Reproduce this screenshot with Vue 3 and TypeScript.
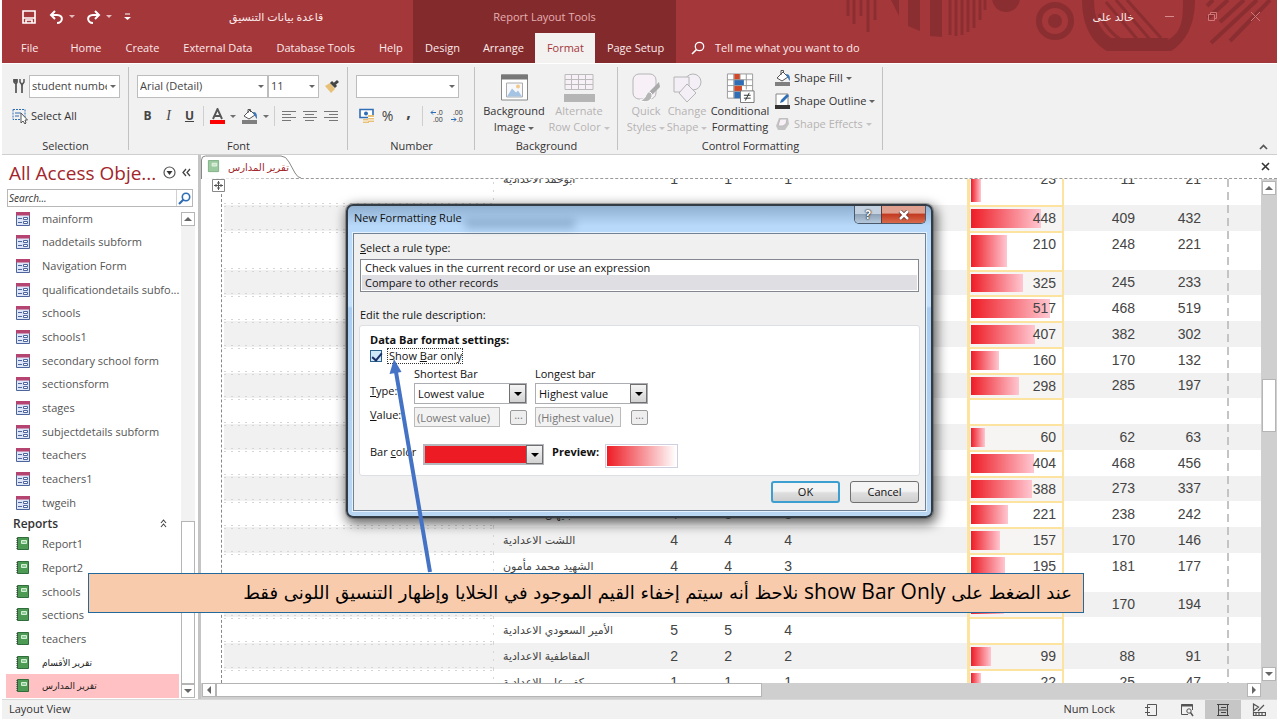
<script setup lang="ts">
import { ref } from 'vue'

interface Row {
  name: string
  a: string
  b: string
  c: string
  total: string
  bar: number
  x: string
  y: string
  tall?: boolean
}

const forms: string[] = [
  'mainform', 'naddetails subform', 'Navigation Form', 'qualificationdetails subfo...',
  'schools', 'schools1', 'secondary school form', 'sectionsform', 'stages',
  'subjectdetails subform', 'teachers', 'teachers1', 'twgeih',
]
const reports = [
  { label: 'Report1' }, { label: 'Report2' }, { label: 'schools' }, { label: 'sections' },
  { label: 'teachers' }, { label: 'تقرير الأقسام', rtl: true },
  { label: 'تقرير المدارس', rtl: true, active: true },
]

const row = (total: string, bar: number, x: string, y: string, name = '', a = '', b = '', c = '', tall = false): Row =>
  ({ total, bar, x, y, name, a, b, c, tall })

const rows: Row[] = [
  row('23', 10, '11', '21', 'ابوحمد الاعدادية', '1', '1', '1', true),
  row('448', 70, '409', '432'),
  row('210', 36, '248', '221', '', '', '', '', true),
  row('325', 52, '245', '233'),
  row('517', 79, '468', '519'),
  row('407', 64, '382', '302'),
  row('160', 28, '170', '132'),
  row('298', 48, '285', '197'),
  row('', 0, '', ''),
  row('60', 14, '62', '63'),
  row('404', 63, '468', '456'),
  row('388', 61, '273', '337'),
  row('221', 37, '238', '242', 'بنيهان الاعدادية', '4', '3', '3'),
  row('157', 29, '170', '146', 'اللشت الاعدادية', '4', '4', '4'),
  row('195', 34, '181', '177', 'الشهيد محمد مأمون', '4', '4', '3', true),
  row('', 33, '170', '194'),
  row('', 0, '', '', 'الأمير السعودي الاعدادية', '5', '5', '4'),
  row('99', 20, '88', '91', 'المقاطفية الاعدادية', '2', '2', '2'),
  row('22', 10, '25', '47', 'كفر علي الاعدادية', '1', '1', '1'),
]

const showBarOnly = ref(true)
</script>

<template>
  <div class="window">
    <header class="top">
      <svg class="deco" width="440" height="63" viewBox="838 0 440 63" aria-hidden="true">
        <g fill="none" stroke="#8b2e31">
          <path stroke-width="3" d="M849 0v16M855 0v24M862 0v16M869 0v32M876 0v20" />
          <path stroke-width="3" d="M951 0v35M957 0v36M963 0v35M969 0v32M975 0v28M981 0v20M986 0v10" />
          <circle cx="1056" cy="21" r="16" stroke-width="6" />
          <path stroke-width="3" d="M1100 14q12 24 34 32M1107 2l36 43M1117 0l37 43M1128 0l34 38" />
          <path stroke-width="4" d="M1212 43l46-43M1231 41l40-41M1221 22l24-22M1209 18l20-18M1208 6l6-6" />
        </g>
        <g fill="#8b2e31">
          <path d="M892 0h8v16zM909 0h12v31l-12-5zM931 0h12v37l-12-1z" />
          <path d="M1083 0h12c0 20 7 32 20 40h54c14-8 15-20 15-40h12c0 24-9 42-24 51h-64c-16-9-25-27-25-51z" />
          <path d="M1112 38h58l-6 8h-50z" />
          <circle cx="1056" cy="21" r="7" /><circle cx="1007" cy="-2" r="14" />
        </g>
      </svg>
      <div class="left-block">
        <div class="title-row">
          <button class="qat" aria-label="Save"><svg width="14" height="14" viewBox="0 0 14 14"><path d="M1 1h12v12H1zM1 8h12M4 13v-3h6v3" fill="none" stroke="#fff" stroke-width="1.6" /></svg></button>
          <button class="qat undo" aria-label="Undo"><svg width="15" height="14" viewBox="0 0 15 14"><path d="M6 1L2 5l4 4M2 5h6c7 0 6 8 0 8" fill="none" stroke="#fff" stroke-width="2" /></svg><i class="caret" /></button>
          <button class="qat redo" aria-label="Redo"><svg width="15" height="14" viewBox="0 0 15 14"><path d="M9 1l4 4-4 4M13 5H7C0 5 1 13 7 13" fill="none" stroke="#fff" stroke-width="2" /></svg><i class="caret" /></button>
          <button class="qat more" aria-label="Customize toolbar"><svg width="7" height="8" viewBox="0 0 7 8"><path d="M1 1h5" stroke="#fff" /><path d="M0 4h7L3.500 7z" fill="#fff" /></svg></button>
          <span class="file-title" dir="rtl">قاعدة بيانات التنسيق</span>
        </div>
        <nav class="tabs">
          <button class="file">File</button><button>Home</button><button>Create</button><button>External Data</button><button>Database Tools</button><button>Help</button>
        </nav>
      </div>
      <div class="context-block">
        <div class="context-title">Report Layout Tools</div>
        <nav class="tabs"><button>Design</button><button>Arrange</button><button class="on">Format</button><button>Page Setup</button></nav>
      </div>
      <div class="right-block">
        <div class="title-row end">
          <span class="user" dir="rtl">خالد على</span>
          <button class="wb" aria-label="Minimize"><svg width="11" height="11"><path d="M1 5.500h9" stroke="#d98a8c" /></svg></button>
          <button class="wb" aria-label="Restore"><svg width="11" height="11"><path d="M1.500 3.500h6v6h-6zM3.500 3V1.500h6v6H8" fill="none" stroke="#d0777a" /></svg></button>
          <button class="wb" aria-label="Close"><svg width="11" height="11"><path d="M1 1l9 9M10 1l-9 9" stroke="#d0777a" /></svg></button>
        </div>
        <div class="tell">
          <svg width="14" height="14" viewBox="0 0 14 14"><circle cx="8.500" cy="5.500" r="4.200" fill="none" stroke="#fff" stroke-width="1.300" /><path d="M5.500 8.500L1 13" stroke="#fff" stroke-width="1.600" /></svg>
          <span>Tell me what you want to do</span>
        </div>
      </div>
    </header>

    <section class="ribbon">
      <div class="group g-selection">
        <div class="line">
          <svg width="12" height="16" viewBox="0 0 12 16"><path d="M3 6v9M1 1v3l2 2 1-2V1M2.500 1v3M9 7v8" stroke="#555" stroke-width="1.700" fill="none" /><path d="M7 1v3l2 3 2-3V1" fill="none" stroke="#555" stroke-width="1.500" /></svg>
          <label class="combo c-student"><select aria-label="Control"><option>student numbe</option></select><i class="caret" /></label>
        </div>
        <div class="line second">
          <button class="text-btn"><svg width="16" height="17" viewBox="0 0 16 17"><path d="M1 1.500h12v10H1z" fill="none" stroke="#2f6db5" stroke-dasharray="2 1" /><path d="M3 5h6M3 8h4" stroke="#2f6db5" /><path d="M9 5v10l2-2 2 3 1-1-1-3h2.500z" fill="#fff" stroke="#555" /></svg>Select All</button>
        </div>
        <div class="caption">Selection</div>
      </div>
      <div class="group g-font">
        <div class="line">
          <label class="combo c-font"><select aria-label="Font"><option>Arial (Detail)</option></select><i class="caret" /></label>
          <label class="combo c-size"><select aria-label="Font size"><option>11</option></select><i class="caret" /></label>
          <button class="icon painter" aria-label="Format painter"><svg width="16" height="15" viewBox="0 0 16 15"><path d="M1 7l5-3 5 6-4 4z" fill="#e9c078" /><path d="M7 3l5 5M9.500 6L14 2" stroke="#444" stroke-width="3" /></svg></button>
        </div>
        <div class="line second font-buttons">
          <button class="icon"><b>B</b></button><button class="icon"><i class="ital">I</i></button><button class="icon"><b><u>U</u></b></button>
          <span class="sep" />
          <button class="icon wide" aria-label="Font color"><svg width="15" height="16" viewBox="0 0 15 16"><path d="M3 11L7.500 1 12 11M4.500 8h6" fill="none" stroke="#555" stroke-width="1.900" /><path fill="#f00" d="M0 12h15v4H0z" /></svg><i class="caret" /></button>
          <button class="icon wide" aria-label="Fill color"><svg width="16" height="16" viewBox="0 0 16 16"><path d="M2 8l6-6 5 5-6 4zM6 5V1.500h2.500V4" fill="#fff" stroke="#555" /><path d="M11 4c4 0 4 3 4 7-2-1-1-3-3-4z" fill="#3b78b8" /><path d="M0 12h15v4H0z" fill="#7f7f7f" /></svg><i class="caret" /></button>
          <span class="sep" />
          <button class="icon" aria-label="Align left"><svg width="14" height="12"><path d="M0 1.500h14M0 4.500h9M0 7.500h14M0 10.500h9" stroke="#777" /></svg></button>
          <button class="icon" aria-label="Center"><svg width="14" height="12"><path d="M0 1.500h14M2 4.500h9M0 7.500h14M2 10.500h9" stroke="#777" /></svg></button>
          <button class="icon" aria-label="Align right"><svg width="14" height="12"><path d="M0 1.500h14M5 4.500h9M0 7.500h14M5 10.500h9" stroke="#777" /></svg></button>
        </div>
        <div class="caption">Font</div>
      </div>
      <div class="group g-number">
        <div class="line"><label class="combo c-format"><select aria-label="Number format"><option></option></select><i class="caret" /></label></div>
        <div class="line second num-buttons">
          <button class="icon" aria-label="Currency"><svg width="16" height="16" viewBox="0 0 16 16"><path d="M1 1.500h13v8H1z" fill="#fff" stroke="#2f6db5" stroke-width="1.600" /><circle cx="7" cy="5.500" r="2" fill="#2f6db5" /><path d="M9 7h6v7H9zM4 11h6v4H4z" fill="#e9c078" /><path d="M9 9.500h6M9 12h6M4 13h5" stroke="#fff" /></svg></button>
          <button class="icon pct">%</button><button class="icon comma">,</button>
          <span class="sep" />
          <button class="icon dec" aria-label="Increase decimals"><svg width="14" height="14" viewBox="0 0 14 14"><text x="7" y="6">.0</text><text x="3" y="13">.00</text><path d="M6 3.500H1M3 1.500l-2 2 2 2" fill="none" stroke="#2f6db5" /></svg></button>
          <button class="icon dec" aria-label="Decrease decimals"><svg width="14" height="14" viewBox="0 0 14 14"><text x="2" y="6">.00</text><text x="6" y="13">.0</text><path d="M0 10.500h5M3 8.500l2 2-2 2" fill="none" stroke="#2f6db5" /></svg></button>
        </div>
        <div class="caption">Number</div>
      </div>
      <div class="group g-back">
        <div class="bigs">
          <button class="big b-bg"><svg width="27" height="27" viewBox="0 0 27 27"><path d="M.5.500h26v25H.5z" fill="#fff" stroke="#888" /><path d="M0 0h27v5H0z" fill="#777" /><path d="M5.500 8.500h16v14h-16z" fill="#f6f8fb" stroke="#aaa" /><path d="M6 22l5-8 4 4 2-2 4 6z" fill="#a5c3e2" /><circle cx="17" cy="12" r="2" fill="#f3c98b" /></svg><span>Background<br>Image <i class="caret" /></span></button>
          <button class="big b-alt off" disabled><svg width="31" height="28" viewBox="0 0 31 28"><path d="M1 .5h28v15H1z" fill="#f7f0f7" stroke="#bbb" /><path d="M1 5.500h28M1 10.500h28M7.500 0v16M14.500 0v16M21.500 0v16" stroke="#bbb" /><path d="M0 20h31v8H0z" fill="#b5b5b5" /></svg><span>Alternate<br>Row Color <i class="caret" /></span></button>
        </div>
        <div class="caption">Background</div>
      </div>
      <div class="group g-control">
        <div class="bigs">
          <button class="big b-quick off" disabled><svg width="29" height="30" viewBox="0 0 29 30"><rect x="1" y="1" width="23" height="25" rx="6" fill="#f7f0f7" stroke="#b5b5b5" /><path d="M27 9L16 20l3 3 9-9z" fill="#aaa" /><path d="M18 19c-5-1-3 8-10 8 5 4 13 1 12-6z" fill="#b5b5b5" stroke="#fff" /></svg><span>Quick<br>Styles <i class="caret" /></span></button>
          <button class="big b-shape off" disabled><svg width="29" height="30" viewBox="0 0 29 30"><circle cx="20" cy="9" r="8" fill="#f4eff6" stroke="#b5b5b5" /><path d="M1 4h15v15H1z" fill="#f4eff6" stroke="#b5b5b5" /><path d="M14 11l9 9-9 9-8-9z" fill="#f4eff6" stroke="#b5b5b5" /></svg><span>Change<br>Shape <i class="caret" /></span></button>
          <button class="big b-cond"><svg width="29" height="31" viewBox="0 0 29 31"><path d="M1 1h26v25H1z" fill="#fff" stroke="#999" /><path d="M8 1h6v6H8zM8 13h8v6H8z" fill="#d24726" /><path d="M8 7h10v6H8zM8 19h6v7H8z" fill="#2f6db5" /><path d="M1 7h26M1 13h26M1 19h26M7.500 1v25M14 1v6M20.500 1v16" stroke="#999" fill="none" /><path d="M14.500 18.500h14v12h-14z" fill="#fff" stroke="#777" /><path d="M18 23h7M18 26h7M23.500 20.500l-4 8" stroke="#333" /></svg><span>Conditional<br>Formatting</span></button>
          <div class="stack">
            <button class="text-btn"><svg width="16" height="16" viewBox="0 0 16 16"><path d="M2 8l6-6 5 5-6 4zM6 5V.5h2.500V3" fill="#fff" stroke="#555" /><path d="M11 4c4 0 4 3 4 7-2-1-1-3-3-4z" fill="#3b78b8" /><path d="M0 12h15v4H0z" fill="#7f7f7f" /></svg>Shape Fill <i class="caret" /></button>
            <button class="text-btn"><svg width="16" height="16" viewBox="0 0 16 16"><path d="M1 12V1h12v11" fill="#fff" stroke="#888" /><path d="M5 10l1-3 6-6 2 2-6 6z" fill="#2f6db5" /><path d="M0 12h15v4H0z" fill="#333" /></svg>Shape Outline <i class="caret" /></button>
            <button class="text-btn off" disabled><svg width="16" height="16" viewBox="0 0 16 16"><path d="M4 2h9l1 6-4 6H3l-2-4z" fill="#c4c4c4" /><path d="M5 3h7l-1 5-3 2H3z" fill="#f7f0f7" stroke="#bbb" /></svg>Shape Effects <i class="caret" /></button>
          </div>
        </div>
        <div class="caption">Control Formatting</div>
      </div>
      <button class="collapse" aria-label="Collapse ribbon"><svg width="9" height="6"><path d="M1 5l3.500-3.500L8 5" fill="none" stroke="#555" stroke-width="1.700" /></svg></button>
    </section>

    <main class="work">
      <aside class="nav">
        <div class="nav-head">
          <h1>All Access Obje...</h1>
          <button aria-label="Choose category"><svg width="13" height="13"><circle cx="6.500" cy="6.500" r="5.500" fill="none" stroke="#555" stroke-width="1.200" /><path d="M3.500 5h6l-3 4z" fill="#333" /></svg></button>
          <button class="fold" aria-label="Collapse pane"><svg width="9" height="9"><path d="M4 1L1 4.500 4 8M8 1L5 4.500 8 8" fill="none" stroke="#444" stroke-width="1.300" /></svg></button>
        </div>
        <div class="search">
          <input type="text" placeholder="Search..." aria-label="Search">
          <button aria-label="Search objects"><svg width="13" height="13" viewBox="0 0 13 13"><circle cx="8" cy="5" r="3.700" fill="none" stroke="#2f6db5" stroke-width="1.600" /><path d="M5.500 7.500L1 12" stroke="#2f6db5" stroke-width="2.200" /></svg></button>
        </div>
        <div class="nav-body">
          <ul>
            <li v-for="f in forms" :key="f" class="item"><a href="#"><svg width="14" height="14" viewBox="0 0 14 14"><path d="M.5.500h13v13H.5z" fill="#dde5f6" stroke="#4d659c" /><path d="M0 0h14v3.500H0z" fill="#b54470" /><path d="M2 6.500h4M2 10.500h4" stroke="#4d659c" /><path d="M7.500 5.500h4v2h-4zM7.500 9.500h4v2h-4z" fill="#fff" stroke="#4d659c" /></svg>{{ f }}</a></li>
            <li class="section">Reports<svg width="7" height="9"><path d="M1 4l2.500-3L6 4M1 8l2.500-3L6 8" fill="none" stroke="#444" stroke-width="1.100" /></svg></li>
            <li v-for="r in reports" :key="r.label" class="item" :class="{ active: r.active, rtl: r.rtl }"><a href="#"><svg width="14" height="14" viewBox="0 0 14 14"><path d="M1.500.500h11v12h-11z" fill="#4d9a55" stroke="#2f6d3a" /><path d="M1 1v12" stroke="#333" stroke-dasharray="1 1" /><path d="M5.500 3.500h5v3h-5z" fill="#8fc795" stroke="#d5efd7" /></svg><span>{{ r.label }}</span></a></li>
          </ul>
          <div class="vbar">
            <button aria-label="Scroll up"><i class="up" /></button><span class="track" /><span class="thumb" /><button aria-label="Scroll down"><i class="down" /></button>
          </div>
        </div>
      </aside>

      <section class="doc">
        <div class="doc-tabs">
          <svg class="tab-shape" width="100" height="24" viewBox="0 0 100 24"><path d="M.5 24V5q0-4 4-4H80q5 0 8 6l6 11q3 5 6 5" fill="#fff" stroke="#888" /></svg>
          <svg width="13" height="13" viewBox="0 0 14 14"><path d="M1.500.500h11v12h-11z" fill="#9bcaa0" stroke="#7fae85" /><path d="M5.500 3.500h5v3h-5z" fill="#c8e5ca" stroke="#e5f5e6" /></svg>
          <span class="doc-name" dir="rtl">تقرير المدارس</span>
          <button class="doc-close" aria-label="Close report"><svg width="9" height="9"><path d="M1 1l7 7M8 1L1 8" stroke="#333" stroke-width="1.600" /></svg></button>
        </div>
        <div class="doc-body">
          <div class="page">
            <svg class="mover" width="13" height="13"><path d="M.5.500h12v12H.5z" fill="#fff" stroke="#888" /><path d="M6.500 2v9M2 6.500h9M5 4h3M5 9h3M4 5v3M9 5v3" stroke="#555" /></svg>
            <table>
              <colgroup><col class="k0"><col class="k1"><col class="k2"><col class="k3"><col class="k4"><col class="k5"><col class="k6"><col class="k7"><col class="k8"><col></colgroup>
              <tbody>
                <tr v-for="(r, i) in rows" :key="i" :class="{ tall: r.tall }">
                  <td class="dots" /><td class="name" dir="rtl">{{ r.name }}</td><td>{{ r.a }}</td><td>{{ r.b }}</td><td>{{ r.c }}</td><td />
                  <td class="bar" :style="{ '--w': r.bar + 'px' }">{{ r.total }}</td><td>{{ r.x }}</td><td>{{ r.y }}</td><td class="edge" />
                </tr>
              </tbody>
            </table>
          </div>
          <div class="doc-vbar">
            <button aria-label="Scroll up"><i class="up" /></button><span class="gap-a" /><span class="thumb" /><span class="gap-b" /><button aria-label="Scroll down"><i class="down" /></button>
          </div>
        </div>
        <div class="hbar">
          <button aria-label="Scroll left"><i class="left" /></button><span class="thumb" /><span class="rest" /><button aria-label="Scroll right"><i class="right" /></button>
        </div>
      </section>
    </main>

    <footer class="status">
      <span class="mode">Layout View</span><span class="lock">Num Lock</span>
      <button aria-label="Report view"><svg width="14" height="14"><path d="M3.500 1.500h9v11h-9zM1 4.500h5M1 9.500h5" fill="none" stroke="#555" /></svg></button>
      <button aria-label="Print preview"><svg width="14" height="14"><path d="M8 11.500H1.500v-10h11V7" fill="none" stroke="#555" /><path d="M1 2.500h12" stroke="#555" stroke-width="2" /><circle cx="9" cy="8" r="2.200" fill="none" stroke="#555" /><path d="M10.500 9.500L13 13" stroke="#555" stroke-width="1.500" /></svg></button>
      <button class="on" aria-label="Layout view"><svg width="14" height="14"><path d="M2.500 1v12M11.500 1v12M1 1.500h12M1 12.500h12M5 4.500h5M2 7h10M5 9.500h5" fill="none" stroke="#444" /></svg></button>
      <button aria-label="Design view"><svg width="14" height="14"><path d="M1.500 1v7l5-4zM1.500 9.500h12v3h-12zM4 10v2M7 10v2M10 10v2M6 8l6-6" fill="none" stroke="#555" stroke-width="1.200" /></svg></button>
    </footer>

    <div class="dialog" role="dialog" aria-label="New Formatting Rule">
      <div class="dlg-title">
        <span class="ghost" aria-hidden="true" />
        <span class="dlg-name">New Formatting Rule</span>
        <div class="dlg-ctl">
          <button class="help" aria-label="Help">?</button>
          <button class="close" aria-label="Close"><svg width="12" height="10" viewBox="0 0 12 10"><path d="M2 1l8 8M10 1L2 9" stroke="#5c2a28" stroke-width="4" /><path d="M2 1l8 8M10 1L2 9" stroke="#fff" stroke-width="2.500" /></svg></button>
        </div>
      </div>
      <div class="dlg-body">
        <label for="rule-type"><u>S</u>elect a rule type:</label>
        <div id="rule-type" class="listbox" role="listbox" tabindex="0">
          <div role="option">Check values in the current record or use an expression</div>
          <div role="option" class="sel" aria-selected="true">Compare to other records</div>
        </div>
        <div class="edit-label">Edit the rule description:</div>
        <div class="panel">
          <strong>Data Bar format settings:</strong>
          <label class="check"><input v-model="showBarOnly" type="checkbox"><span>Show <u>B</u>ar only</span></label>
          <div class="fields">
            <span /><span class="col-head">Shortest Bar</span><span class="col-head">Longest bar</span>
            <label for="t1"><u>T</u>ype:</label>
            <div class="drop"><select id="t1"><option>Lowest value</option></select><i><b class="down" /></i></div>
            <div class="drop"><select aria-label="Longest type"><option>Highest value</option></select><i><b class="down" /></i></div>
            <label for="v1"><u>V</u>alue:</label>
            <div class="val"><input id="v1" type="text" value="(Lowest value)" disabled><button disabled>...</button></div>
            <div class="val"><input type="text" value="(Highest value)" disabled aria-label="Longest value"><button disabled>...</button></div>
          </div>
          <div class="color-row">
            <label for="bc">Bar <u>c</u>olor</label>
            <div class="drop color"><select id="bc"><option aria-label="Red" /></select><i><b class="down" /></i></div>
            <strong>Preview:</strong>
            <span class="preview" />
          </div>
        </div>
        <div class="actions"><button class="ok">OK</button><button>Cancel</button></div>
      </div>
    </div>

    <svg class="arrow" width="60" height="216" viewBox="0 0 60 216" aria-hidden="true"><path d="M46 214L12 14" stroke="#4472c4" stroke-width="4" /><path d="M10 1l7.500 13-12 2z" fill="#4472c4" /></svg>
    <div class="callout" dir="rtl">عند الضغط على <span>show Bar Only</span> نلاحظ أنه سيتم إخفاء القيم الموجود في الخلايا وإظهار التنسيق اللونى فقط</div>
  </div>
</template>

<style>
body { background: #fff; }
</style>

<style scoped>
* { box-sizing: border-box; }
.window { position: relative; display: flex; flex-direction: column; height: 100vh; padding: 0 3px 1px 2px; overflow: hidden; font: 11px/16px "Open Sans", "DejaVu Sans", sans-serif; color: #333; }
button, select, input { font: inherit; color: inherit; margin: 0; padding: 0; border: 0; background: none; }
button { display: flex; align-items: center; justify-content: center; }
svg { display: block; flex: none; }
ul { margin: 0; padding: 0; list-style: none; }
.caret { display: inline-block; flex: none; border: 3px solid transparent; border-top: 3px solid currentColor; border-bottom: 0; vertical-align: middle; opacity: .75; }
.up, .down, .left, .right { display: block; border: 4px solid transparent; }
.up { border-top: 0; border-bottom-color: #666; }
.down { border-bottom: 0; border-top-color: #666; }
.left { border-left: 0; border-right-color: #666; }
.right { border-right: 0; border-left-color: #666; }

.top { position: relative; display: flex; flex: none; height: 63px; background: #a4373a; color: #fbeaea; }
.deco { position: absolute; right: 0; top: 0; }
.left-block { width: 411px; flex: none; }
.title-row { display: flex; align-items: center; height: 33px; padding-left: 20px; }
.qat { gap: 5px; }
.undo { margin-left: 13px; }
.redo { margin-left: 11px; }
.more { margin-left: 12px; }
.file-title { margin-left: 98px; font-size: 11px; white-space: nowrap; }
.tabs { display: flex; height: 30px; }
.tabs button { padding: 0 12px; white-space: nowrap; }
.tabs .file { padding: 0 20px 0 19px; }
.context-block { width: 263px; flex: none; background: #832a2d; }
.context-title { height: 33px; line-height: 33px; text-align: center; color: #e6b0b1; }
.context-block .tabs { padding-right: 2px; }
.context-block .tabs button { padding: 0 11px 0 12px; }
.context-block .tabs .on { background: #f3f2f1; color: #a4373a; }
.right-block { flex: 1; position: relative; }
.end { justify-content: flex-end; padding-right: 16px; }
.user { margin-right: 30px; font-size: 11px; }
.wb { margin-left: 32px; }
.wb:first-of-type { margin-left: 0; }
.tell { display: flex; align-items: center; gap: 10px; height: 30px; padding-left: 15px; }

.ribbon { display: flex; flex: none; height: 92px; background: #f2f1f1; border-top: 1px solid #fff; border-bottom: 1px solid #d0cfcf; position: relative; }
.group { display: flex; flex-direction: column; flex: none; padding: 10px 0 0 8px; background: linear-gradient(#c3c2c2, #c3c2c2) 100% 3px / 1px 83px no-repeat; }
.g-selection { width: 127px; } .g-font { width: 219px; } .g-number { width: 127px; } .g-back { width: 143px; } .g-control { width: 265px; }
.line { display: flex; align-items: center; height: 24px; }
.second { margin-top: 6px; }
.g-selection .line { gap: 4px; padding-left: 3px; }
.g-selection .second { padding-left: 2px; }
.caption { margin: auto 0 1px -8px; text-align: center; line-height: 14px; }
.combo { position: relative; display: block; height: 23px; }
.combo select { appearance: none; width: 100%; height: 23px; padding: 0 12px 0 2px; border: 1px solid #bdbdbd; background: #fff; color: #444; outline: 0; }
.combo .caret { position: absolute; right: 4px; top: 10px; }
.c-student { width: 91px; } .c-font { width: 131px; } .c-size { width: 51px; } .c-format { width: 103px; }
.painter { margin-left: 2px; }
.text-btn { gap: 3px; color: #333; white-space: nowrap; }
.off { color: #b5b3b3; }
.icon { color: #444; font-size: 12px; width: 21px; height: 20px; }
.ital { font-family: "Liberation Serif", serif; font-size: 14px; }
.wide { width: 32px; gap: 5px; }
.icon .caret { color: #444; }
.sep { width: 1px; height: 20px; background: #d0cfcf; margin: 0 3px; }
.num-buttons .pct { font-size: 14px; }
.num-buttons .comma { font-weight: 700; font-size: 16px; padding-bottom: 8px; }
.dec text { font: 7px "Open Sans", sans-serif; fill: #333; }
.bigs { display: flex; height: 62px; margin-top: -1px; }
.big { flex-direction: column; justify-content: flex-start; gap: 0; white-space: nowrap; color: #333; }
.big.off { color: #b5b3b3; }
.big svg { height: 30px; }
.big span { line-height: 16px; text-align: center; }
.b-bg { width: 62px; } .b-alt { width: 68px; }
.b-quick { width: 40px; } .b-shape { width: 42px; } .b-cond { width: 64px; }
.stack { display: flex; flex-direction: column; align-items: flex-start; gap: 7px; padding-left: 3px; margin-top: -3px; }
.stack .off { color: #b5b3b3; }
.collapse { margin: auto 9px 4px auto; }

.work { display: flex; flex: 1; min-height: 0; }
.nav { display: flex; flex-direction: column; width: 199px; flex: none; border-right: 3px solid #c4c4c4; padding: 1px 3px 1px 5px; }
.nav-head { display: flex; align-items: center; height: 33px; padding-left: 2px; flex: none; }
.nav-head h1 { margin: 0; flex: 1; font: 19px/30px "Open Sans", sans-serif; color: #a3262b; white-space: nowrap; }
.nav-head .fold { margin: 0 4px 0 6px; }
.search { display: flex; height: 18px; flex: none; margin-right: 2px; border: 1px solid #b8b8b8; }
.search input { flex: 1; min-width: 0; padding-left: 1px; font-style: italic; font-size: 10px; outline: 0; }
.search input::placeholder { color: #333; opacity: 1; }
.search button { width: 16px; border-left: 1px solid #d0d0d0; }
.nav-body { display: flex; flex: 1; min-height: 0; }
.nav-body ul { display: flex; flex-direction: column; flex: 1; min-width: 0; margin-left: -1px; }
.item { flex: 1; min-height: 0; display: flex; }
.item a { display: flex; align-items: center; gap: 12px; flex: 1; padding-left: 10px; color: #555; text-decoration: none; white-space: nowrap; }
.item.rtl a { color: #222; }
.item.rtl span { font-size: 9px; }
.item.active { background: #ffc1c4; }
.section { display: flex; flex: none; height: 18px; align-items: center; justify-content: space-between; padding: 0 12px 0 7px; font-weight: 600; font-size: 12px; }
.vbar { display: flex; flex-direction: column; width: 14px; margin: 5px 0 0 2px; }
.vbar button, .doc-vbar button, .hbar button { flex: none; width: 14px; height: 14px; background: #fff; border: 1px solid #b5b5b5; }
.vbar .track { flex: 295; background: #f2f2f2; }
.vbar .thumb { flex: 161; background: #fff; border: 1px solid #b5b5b5; }

.doc { display: flex; flex-direction: column; flex: 1; min-width: 0; }
.doc-tabs { position: relative; display: flex; align-items: center; flex: none; height: 24px; padding: 0 7px 0 6px; border-bottom: 1px dashed #999; }
.tab-shape { position: absolute; left: 0; top: 0; }
.doc-tabs > svg + svg { position: relative; }
.doc-name { position: relative; margin-left: 8px; font-size: 10px; color: #a3262b; }
.doc-close { margin-left: auto; }
.doc-body { display: flex; flex: 1; min-height: 0; }
.page { position: relative; flex: 1; min-width: 0; overflow: hidden; padding-left: 23px; }
.page::before { content: ""; position: absolute; left: 20px; top: 0; bottom: 0; border-left: 1px dashed #888; }
.mover { position: absolute; left: 11px; top: 0; z-index: 1; }
table { width: 100%; margin-top: -13px; border-collapse: separate; border-spacing: 0; table-layout: fixed; font: 14px/26px "Liberation Sans", "DejaVu Sans", sans-serif; color: #444; }
.k0 { width: 270px; } .k1 { width: 140px; } .k2 { width: 44px; } .k3 { width: 54px; } .k4 { width: 60px; } .k5 { width: 175px; } .k6 { width: 97px; } .k7 { width: 71px; } .k8 { width: 66px; }
tr { height: 26px; }
tr:nth-child(4n) { height: 25px; line-height: 25px; }
tr.tall { height: 39px; }
tr:nth-child(even) { background: #f1f1f1; }
td { padding: 0; text-align: right; vertical-align: top; white-space: nowrap; }
.name { font-size: 11px; padding-left: 9px; text-align: left; }
.dots { background: repeating-linear-gradient(90deg, #d6d6d6 0 2px, transparent 2px 7px) 0 1px / 100% 1px no-repeat, repeating-linear-gradient(90deg, #d6d6d6 0 2px, transparent 2px 7px) 0 calc(100% - 1px) / 100% 1px no-repeat, repeating-linear-gradient(#d6d6d6 0 2px, transparent 2px 8px) 100% 0 / 1px 100% no-repeat; }
.bar { border: 2px solid #fde3a0; border-width: 2px 2px 0 3px; padding-right: 6px; line-height: 22px; background: linear-gradient(90deg, #ee1c25, #ffc7d1) no-repeat 1px 2px / var(--w) calc(100% - 5px) #fff; }
tr:nth-child(even) .bar { background-color: #f7f5f3; }
.edge { background: repeating-linear-gradient(#c4c4c4 0 8px, transparent 8px 13px) 26px 0 / 2px 100% no-repeat; }
.doc-vbar { display: flex; flex-direction: column; width: 16px; padding: 2px 1px; background: #cfcfcf; }
.doc-vbar .gap-a { flex: 184; } .doc-vbar .thumb { flex: 50; background: #fff; border: 1px solid #b5b5b5; } .doc-vbar .gap-b { flex: 235; }
.hbar { display: flex; flex: none; height: 16px; padding: 0 16px 2px 1px; background: #cfcfcf; }
.hbar .thumb { flex: 545; background: #fff; border: 1px solid #b5b5b5; } .hbar .rest { flex: 486; }

.status { display: flex; align-items: stretch; flex: none; height: 20px; background: #f2f1f1; border-top: 1px solid #d8d8d8; line-height: 18px; }
.mode { margin-left: 7px; }
.lock { margin-left: auto; margin-right: 18px; }
.status button { width: 36px; }
.status .on { background: #c6c6c6; }

.dialog { position: absolute; left: calc(50% - 294px); top: 204px; width: 587px; height: 314px; display: flex; flex-direction: column; padding: 0 5px 5px; border: 2px solid #333b45; border-radius: 7px; background: linear-gradient(180deg, #8fb0d0, #b8d9fa 20px, #c5e2fd 100px, #a9cdf2 102px, #b9d6f3); box-shadow: 0 0 0 1px rgba(80, 80, 80, .4), 2px 4px 12px 2px rgba(0, 0, 0, .6); color: #111; }
.ghost { position: absolute; left: 112px; top: 14px; width: 110px; height: 8px; background: #3a5877; filter: blur(4px); opacity: .35; }
.dlg-title { position: relative; display: flex; justify-content: space-between; flex: none; height: 27px; line-height: 24px; padding-left: 1px; }
.dlg-name { position: relative; }
.dlg-ctl { display: flex; height: 18px; border: 1px solid #4a5a6c; border-top: 0; border-radius: 0 0 5px 5px; overflow: hidden; }
.help { width: 26px; background: linear-gradient(#c3d0df 45%, #8fa3b8 50%, #b6c9dc); color: #fff; font-weight: 700; font-size: 12px; text-shadow: 0 0 2px #000, 0 0 1px #000; }
.dlg-ctl .close { width: 44px; border-left: 1px solid #5a3a3a; background: linear-gradient(#e0a090 40%, #c23b22 50%, #d86a4c); }
.dlg-body { flex: 1; padding: 6px; border: 1px solid #6f8296; background: #f0f0f0; outline: 1px solid #e5f1fc; display: flex; flex-direction: column; }
.dlg-body > label, .edit-label { flex: none; line-height: 16px; height: 16px; }
.listbox { margin-top: 3px; flex: none; height: 33px; padding: 0 1px 1px; border: 1px solid #828790; background: #fff; outline: 0; }
.listbox div { line-height: 15px; padding-left: 3px; }
.listbox .sel { background: #dfdee3; }
.edit-label { margin-top: 15px; }
.panel { margin: 2px -1px 0; flex: none; height: 151px; padding: 6px 10px; border: 1px solid #dcdfe3; border-radius: 3px; background: #fff; }
.panel strong { display: block; line-height: 16px; }
.check { display: flex; align-items: center; gap: 5px; height: 16px; }
.check input { appearance: none; width: 12px; height: 12px; border: 1px solid #2c628b; background: #cfe8f8; position: relative; }
.check input:checked::after { content: ""; position: absolute; left: 3px; top: 0; width: 4px; height: 8px; border: solid #1c2f66; border-width: 0 2px 2px 0; transform: rotate(40deg); }
.check span { border: 1px dotted #333; line-height: 14px; padding: 0 0 0 1px; }
.fields { display: grid; grid-template-columns: 44px 113px 113px; row-gap: 3px; align-items: start; }
.fields > :nth-child(3n) { margin-left: 8px; margin-right: -8px; }
.col-head { line-height: 16px; margin-top: 2px; margin-bottom: -2px; }
.drop { position: relative; height: 21px; }
.drop select { appearance: none; width: 100%; height: 21px; padding: 0 20px 0 3px; border: 1px solid #abadb3; background: #fff; outline: 0; }
.drop > i { position: absolute; right: 1px; top: 1px; width: 17px; height: 19px; display: flex; align-items: center; justify-content: center; border: 1px solid #707070; background: linear-gradient(#f5f5f5, #d2d2d2); pointer-events: none; }
.drop .down { border-top-color: #000; }
.val { display: flex; justify-content: space-between; align-items: center; }
.val input { width: 86px; height: 20px; padding-left: 2px; border: 1px solid #bbb; background: #f2f2f2; color: #777; }
.val button { width: 17px; height: 15px; border: 1px solid #999; border-radius: 2px; background: #eee; color: #777; line-height: 8px; padding-bottom: 5px; }
.color-row { display: flex; align-items: flex-start; margin-top: 17px; }
.color-row label { width: 53px; line-height: 16px; }
.color { width: 121px; }
.color select { border: 2px solid #b5b7bc; background: #ed1c24; }
.color-row strong { margin-left: 8px; width: 53px; }
.preview { width: 73px; height: 24px; border: 1px solid #d0cfe0; background: linear-gradient(90deg, #ee1c25, #fff) content-box; padding: 1px; }
.actions { display: flex; justify-content: flex-end; gap: 10px; margin-top: 5px; flex: none; }
.actions button { width: 69px; height: 22px; border: 1px solid #707070; border-radius: 3px; background: linear-gradient(#f4f4f4 45%, #dedede 55%, #cfcfcf); }
.actions .ok { border: 2px solid #3c9fd0; }

.arrow { position: absolute; left: calc(50% - 256px); top: 358px; }
.callout { position: absolute; left: 88px; right: 196px; top: 573px; height: 40px; padding: 0 11px; border: 1px solid #24699c; background: #f8cbad; color: #000; font: 18px/38px "DejaVu Sans", sans-serif; white-space: nowrap; }
.callout span { font: 21px/30px "Open Sans", sans-serif; }
</style>
